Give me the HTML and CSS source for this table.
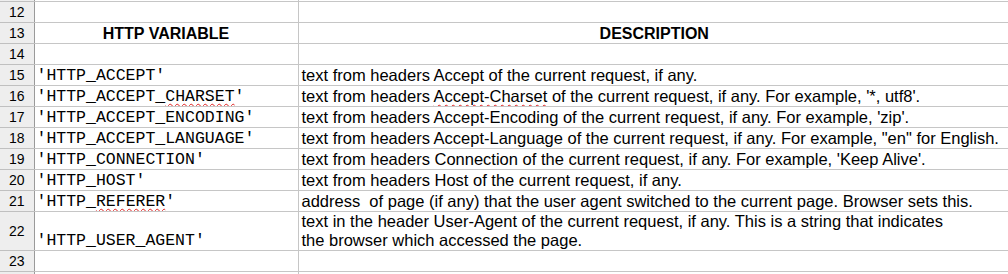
FILE: index.html
```html
<!DOCTYPE html>
<html>
<head>
<meta charset="utf-8">
<link rel="stylesheet" href="styles.css">
</head>
<body>
<table class="sheet">
  <colgroup><col class="c-hdr"><col class="c-a"><col class="c-b"></colgroup>
  <tr class="r-stub"><td class="rh"></td><td></td><td></td></tr>
  <tr><td class="rh">12</td><td></td><td></td></tr>
  <tr><td class="rh">13</td><td class="head">HTTP VARIABLE</td><td class="head">DESCRIPTION</td></tr>
  <tr><td class="rh">14</td><td></td><td></td></tr>
  <tr><td class="rh">15</td><td class="mono">'HTTP_ACCEPT'</td><td class="desc">text from headers Accept of the current request, if any.</td></tr>
  <tr><td class="rh">16</td><td class="mono">'HTTP_ACCEPT_<span class="spell">CHARSET</span>'</td><td class="desc">text from headers <span class="spell">Accept-Charset</span> of the current request, if any. For example, '*, utf8'.</td></tr>
  <tr><td class="rh">17</td><td class="mono">'HTTP_ACCEPT_ENCODING'</td><td class="desc">text from headers Accept-Encoding of the current request, if any. For example, 'zip'.</td></tr>
  <tr><td class="rh">18</td><td class="mono">'HTTP_ACCEPT_LANGUAGE'</td><td class="desc">text from headers Accept-Language of the current request, if any. For example, "en" for English.</td></tr>
  <tr><td class="rh">19</td><td class="mono">'HTTP_CONNECTION'</td><td class="desc">text from headers Connection of the current request, if any. For example, 'Keep Alive'.</td></tr>
  <tr><td class="rh">20</td><td class="mono">'HTTP_HOST'</td><td class="desc">text from headers Host of the current request, if any.</td></tr>
  <tr><td class="rh">21</td><td class="mono">'HTTP_<span class="spell">REFERER</span>'</td><td class="desc">address&nbsp; of page (if any) that the user agent switched to the current page. Browser sets this.</td></tr>
  <tr class="r-tall"><td class="rh">22</td><td class="mono">'HTTP_USER_AGENT'</td><td class="desc">text in the header User-Agent of the current request, if any. This is a string that indicates<br>the browser which accessed the page.</td></tr>
  <tr><td class="rh">23</td><td></td><td></td></tr>
  <tr><td class="rh"></td><td></td><td></td></tr>
</table>
</body>
</html>
```
FILE: styles.css
```css
html, body {
  margin: 0;
  padding: 0;
  background: #ffffff;
  overflow: hidden;
}

.sheet {
  border-collapse: collapse;
  table-layout: fixed;
  width: 1010px;
  font-family: "Liberation Sans", Arial, sans-serif;
  font-size: 16.5px;
  color: #000000;
}

.c-hdr { width: 34px; }
.c-a { width: 264px; }
.c-b { width: 712px; }

.sheet td {
  height: 20px;
  padding: 0 2px;
  border-bottom: 1px solid #c6c6c6;
  border-right: 1px solid #c6c6c6;
  vertical-align: bottom;
  white-space: nowrap;
  line-height: 19px;
  overflow: hidden;
}

.sheet td:last-child {
  border-right: none;
}

.sheet .r-stub td {
  height: 1px;
  line-height: 1px;
}

.sheet .r-tall td {
  height: 38px;
}

.sheet td.rh {
  background: #eeeeee;
  text-align: center;
  vertical-align: middle;
  font-size: 14px;
  padding: 0;
  border-right: 1px solid #9a9a9a;
  border-bottom: 1px solid #c0c0c0;
}

.sheet td.head {
  font-weight: bold;
  text-align: center;
  font-size: 16px;
}

.sheet td.mono {
  font-family: "Liberation Mono", "Courier New", monospace;
  font-size: 16.5px;
}

.sheet td.desc {
  padding-left: 3px;
}

.spell {
  text-decoration: underline wavy #e02020;
  text-decoration-skip-ink: none;
  text-decoration-thickness: 1px;
  text-underline-offset: 2px;
}
```
